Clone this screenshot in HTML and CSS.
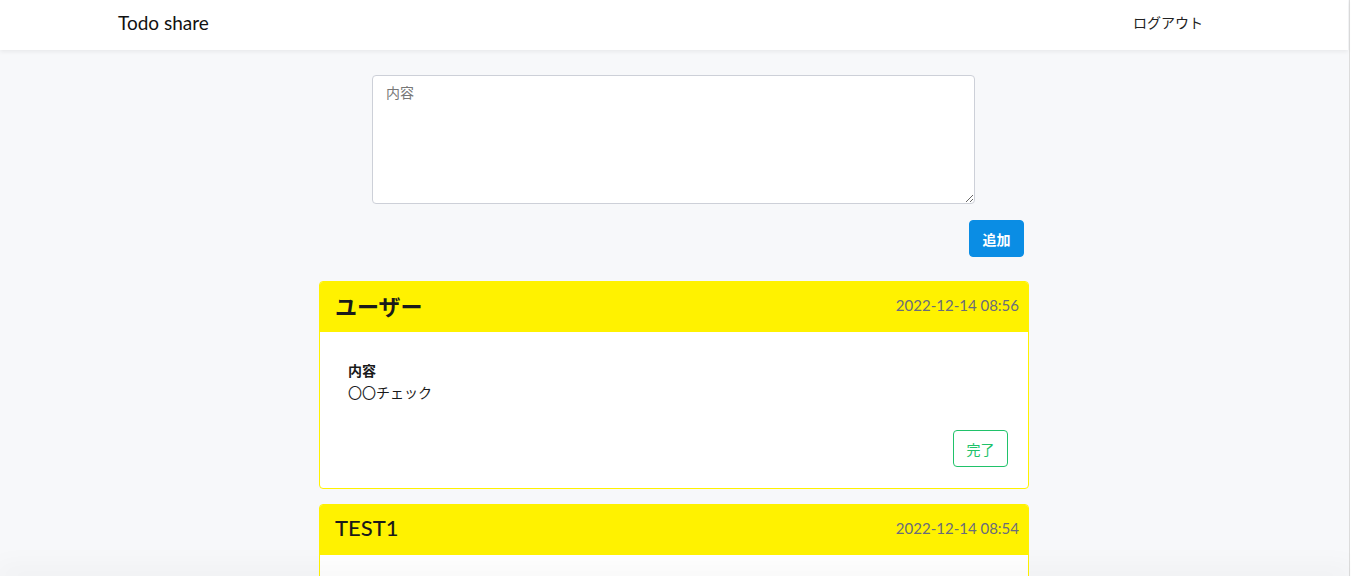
FILE: index.html
```html
<!DOCTYPE html>
<html lang="ja">
<head>
<meta charset="utf-8">
<title>Todo share</title>
<link rel="stylesheet" href="styles.css">
</head>
<body>
<div class="app">
  <header class="navbar">
    <div class="navbar-inner">
      <a class="brand">Todo share</a>
      <a class="logout">ログアウト</a>
    </div>
  </header>
  <main class="main">
    <form class="todo-form">
      <textarea class="textarea" placeholder="内容"></textarea>
      <div class="form-actions">
        <button type="button" class="btn btn-primary">追加</button>
      </div>
    </form>
    <section class="card">
      <div class="card-header">
        <h2 class="card-title">ユーザー</h2>
        <span class="card-date">2022-12-14 08:56</span>
      </div>
      <div class="card-body">
        <div class="label">内容</div>
        <div class="content">〇〇チェック</div>
        <div class="card-actions">
          <button type="button" class="btn btn-outline">完了</button>
        </div>
      </div>
    </section>
    <section class="card">
      <div class="card-header">
        <h2 class="card-title light">TEST1</h2>
        <span class="card-date">2022-12-14 08:54</span>
      </div>
      <div class="card-body">
        <div class="label">内容</div>
        <div class="content">テスト</div>
        <div class="card-actions">
          <button type="button" class="btn btn-outline">完了</button>
        </div>
      </div>
    </section>
  </main>
  <div class="bottom-shade"></div>
</div>
</body>
</html>
```

FILE: styles.css
```css
* { box-sizing: border-box; }
html, body { margin: 0; padding: 0; height: 100%; overflow: hidden; }
body {
  font-family: "Lato", "Noto Sans CJK JP", sans-serif;
  color: #1a1a1a;
  background: #fff;
}
.app {
  width: 1350px;
  min-height: 100%;
  background: #f7f8fa;
  border-right: 1px solid #dcdcdc;
  padding-right: 1px;
}
.navbar {
  height: 50px;
  background: #fff;
  box-shadow: 0 2px 4px rgba(0,0,0,0.06);
  position: relative;
  z-index: 1;
}
.navbar-inner {
  width: 1140px;
  margin: 0 auto;
  height: 50px;
  display: flex;
  align-items: center;
  justify-content: space-between;
  padding: 0 41px 0 14px;
}
.brand {
  font-size: 19px;
  color: #111;
  position: relative;
  top: -3px;
}
.logout {
  font-size: 14px;
  color: #222;
  position: relative;
  top: -3px;
}
.main {
  width: 710px;
  margin: 0 auto;
  padding-top: 25px;
}
.todo-form {
  display: flex;
  flex-direction: column;
  align-items: flex-start;
}
.textarea {
  width: 603px;
  height: 129px;
  margin-left: 53px;
  border: 1px solid #cdd0d8;
  border-radius: 4px;
  background: #fff;
  padding: 6px 13px;
  font-family: "Noto Sans CJK JP", sans-serif;
  font-size: 14px;
  resize: vertical;
  display: block;
}
.textarea::placeholder { color: #777; }
.form-actions {
  align-self: stretch;
  display: flex;
  justify-content: flex-end;
  padding: 16px 5px 0 0;
}
.btn {
  height: 37px;
  padding: 0 12px;
  border-radius: 4px;
  font-family: "Noto Sans CJK JP", sans-serif;
  font-size: 14px;
  cursor: pointer;
}
.btn-primary {
  background: #0a8de4;
  border: 1px solid #0a8de4;
  color: #fff;
  font-weight: 700;
  width: 55px;
}
.btn-outline {
  background: #fff;
  border: 1px solid #20c26a;
  color: #20c26a;
  width: 55px;
}
.card {
  margin-top: 24px;
  border: 1px solid #fff200;
  border-radius: 4px;
  overflow: hidden;
  background: #fff;
}
.card + .card { margin-top: 15px; }
.card-header {
  background: #fff200;
  height: 50px;
  display: flex;
  align-items: center;
  justify-content: space-between;
  padding: 0 9px 5px 15px;
}
.card-title {
  margin: 0;
  font-size: 22px;
  font-weight: 700;
  color: #1a1a1a;
}
.card-title.light { font-weight: 500; }
.card-date {
  font-size: 15px;
  color: #6a6c7c;
}
.card-body {
  padding: 28px 20px 21px 28px;
  font-size: 14px;
}
.label {
  font-weight: 700;
  line-height: 22px;
}
.content {
  line-height: 22px;
}
.card-actions {
  display: flex;
  justify-content: flex-end;
  margin-top: 26px;
}
.bottom-shade {
  position: fixed;
  left: 0;
  right: 0;
  bottom: 0;
  height: 0;
  box-shadow: 0 0 28px 4px rgba(0,0,0,0.09);
}
```
